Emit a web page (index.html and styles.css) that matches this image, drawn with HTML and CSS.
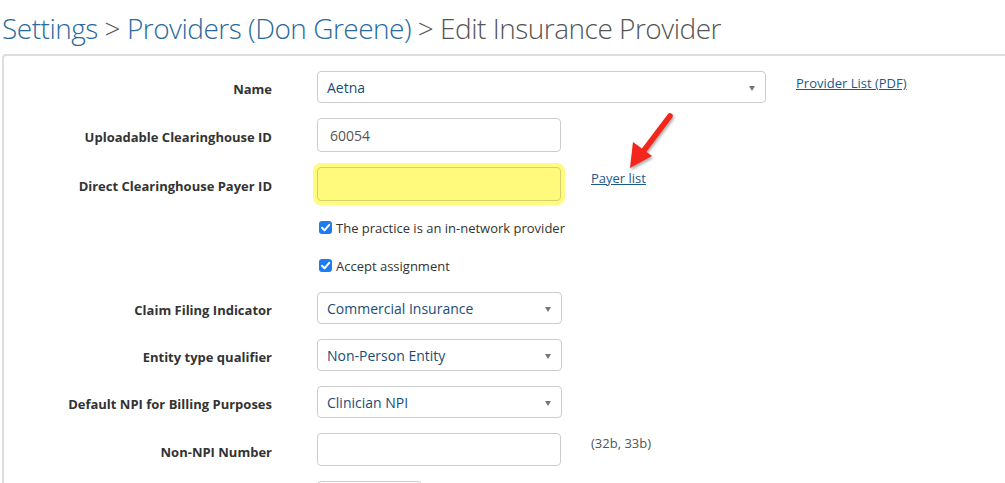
FILE: index.html
```html
<!DOCTYPE html>
<html>
<head>
<meta charset="utf-8">
<link rel="stylesheet" href="styles.css">
</head>
<body>
<h1 class="crumbs"><span class="crumb-link">Settings</span> &gt; <span class="crumb-link">Providers (Don Greene)</span> &gt; Edit Insurance Provider</h1>
<div class="panel">
  <div class="row">
    <label class="lbl">Name</label>
    <div class="select wide"><span>Aetna</span><i class="caret"></i></div>
    <a class="side-link" href="#">Provider List (PDF)</a>
  </div>
  <div class="row">
    <label class="lbl">Uploadable Clearinghouse ID</label>
    <div class="input tall"><span class="val">60054</span></div>
  </div>
  <div class="row">
    <label class="lbl">Direct Clearinghouse Payer ID</label>
    <div class="input tall hl"></div>
    <a class="side-link payer" href="#">Payer list</a>
  </div>
  <div class="row check first-check">
    <span class="lbl"></span>
    <span class="cb"><svg viewBox="0 0 13 13" width="13" height="13"><rect x="0" y="0" width="13" height="13" rx="3" fill="#1d7cf2"/><path d="M3 6.8 L5.5 9.3 L10.2 3.8" fill="none" stroke="#fff" stroke-width="2" stroke-linecap="round" stroke-linejoin="round"/></svg></span>
    <span class="cb-text">The practice is an in-network provider</span>
  </div>
  <div class="row check">
    <span class="lbl"></span>
    <span class="cb"><svg viewBox="0 0 13 13" width="13" height="13"><rect x="0" y="0" width="13" height="13" rx="3" fill="#1d7cf2"/><path d="M3 6.8 L5.5 9.3 L10.2 3.8" fill="none" stroke="#fff" stroke-width="2" stroke-linecap="round" stroke-linejoin="round"/></svg></span>
    <span class="cb-text">Accept assignment</span>
  </div>
  <div class="row after-check">
    <label class="lbl">Claim Filing Indicator</label>
    <div class="select"><span>Commercial Insurance</span><i class="caret"></i></div>
  </div>
  <div class="row">
    <label class="lbl">Entity type qualifier</label>
    <div class="select"><span>Non-Person Entity</span><i class="caret"></i></div>
  </div>
  <div class="row">
    <label class="lbl">Default NPI for Billing Purposes</label>
    <div class="select"><span>Clinician NPI</span><i class="caret"></i></div>
  </div>
  <div class="row">
    <label class="lbl">Non-NPI Number</label>
    <div class="input npi"></div>
    <span class="hint">(32b, 33b)</span>
  </div>
  <div class="row">
    <span class="lbl"></span>
    <div class="input stub"></div>
  </div>
</div>
<svg class="annot-arrow" width="70" height="80" viewBox="0 0 70 80">
  <defs>
    <filter id="sh" x="-30%" y="-30%" width="160%" height="160%">
      <feDropShadow dx="1" dy="2" stdDeviation="1.5" flood-color="#000" flood-opacity="0.35"/>
    </filter>
  </defs>
  <g filter="url(#sh)">
    <line x1="50" y1="8" x2="22" y2="45" stroke="#f2261b" stroke-width="5.5" stroke-linecap="round"/>
    <polygon points="10,60 13,34 32,48" fill="#f2261b"/>
  </g>
</svg>
</body>
</html>
```
FILE: styles.css
```css
html, body {
  margin: 0;
  padding: 0;
  background: #fff;
  overflow: hidden;
}
body {
  font-family: "Open Sans", "DejaVu Sans", sans-serif;
  width: 1005px;
  height: 483px;
  position: relative;
}
.crumbs {
  margin: 8px 0 6px 2px;
  font-size: 28px;
  line-height: 40px;
  font-weight: 300;
  letter-spacing: -0.5px;
  color: #555;
  white-space: nowrap;
}
.crumb-link {
  color: #2a6a9e;
}
.panel {
  margin-left: 2px;
  margin-right: -20px;
  border: 2px solid #ddd;
  border-radius: 4px 4px 0 0;
  padding-top: 15px;
  height: 500px;
  box-sizing: border-box;
}
.row {
  display: flex;
  align-items: center;
  margin-bottom: 15px;
}
.lbl {
  width: 268px;
  flex: none;
  text-align: right;
  font-size: 13px;
  font-weight: 700;
  color: #333;
  margin-right: 45px;
  padding-top: 4px;
  white-space: nowrap;
}
.select, .input {
  box-sizing: border-box;
  border: 1px solid #ccc;
  border-radius: 4px;
  background: #fff;
  flex: none;
  display: flex;
  align-items: center;
}
.select {
  width: 245px;
  height: 32px;
  padding: 0 10px 0 9px;
  justify-content: space-between;
  font-size: 14px;
  color: #1b4c76;
}
.select.wide {
  width: 449px;
}
.caret {
  width: 0;
  height: 0;
  border-left: 3.5px solid transparent;
  border-right: 3.5px solid transparent;
  border-top: 5px solid #777;
  margin-top: 2px;
}
.input {
  width: 244px;
  height: 34px;
  padding-left: 12px;
  font-size: 14px;
  color: #555;
}
.input.npi {
  height: 33px;
}
.input.stub {
  width: 105px;
  height: 30px;
}
.input.hl {
  background: #fff97c;
  border-color: #d6d06a;
  box-shadow: 0 0 0 4px #fffb7e;
}
.side-link {
  align-self: flex-start;
  margin-left: 30px;
  margin-top: 3px;
  font-size: 13px;
  color: #1d5a88;
  text-decoration: underline;
}
.side-link.payer {
  margin-top: 2px;
}
.row.check {
  height: 22px;
  margin-bottom: 0;
  margin-top: 16px;
}
.row.first-check {
  margin-top: 1px;
}
.row.after-check {
  margin-top: 16px;
}
.cb {
  width: 13px;
  height: 13px;
  margin-left: 2px;
  margin-right: 4px;
  display: flex;
}
.cb-text {
  font-size: 13px;
  color: #333;
  padding-top: 2px;
}
.hint {
  align-self: flex-start;
  margin-left: 30px;
  margin-top: 1px;
  font-size: 13px;
  color: #555;
}
.annot-arrow {
  position: absolute;
  left: 620px;
  top: 108px;
}
```
